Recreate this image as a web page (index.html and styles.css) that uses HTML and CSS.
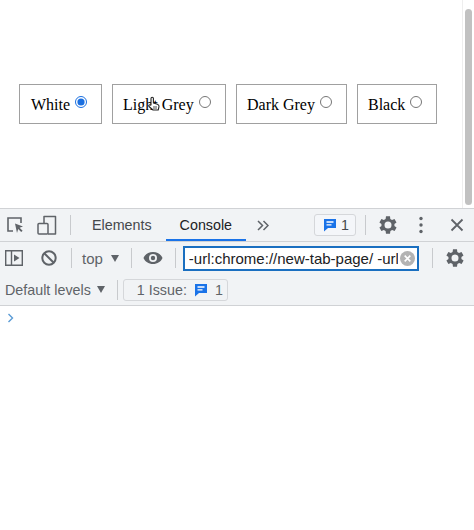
FILE: index.html
```html
<!DOCTYPE html>
<html lang="en">
  <head>
    <meta charset="UTF-8" />
    <title>Document</title>
    <link rel="stylesheet" href="styles.css">
  </head>
  <body>
    <div class="page">
      <div class="swatches">
        <label class="swatch w1">White <input type="radio" name="bg" checked /></label>
        <label class="swatch w2">Light Grey <input type="radio" name="bg" />
          <svg class="cursor" width="14" height="18" viewBox="0 0 14 18">
            <path d="M4 9V2.500a1.200 1.200 0 0 1 2.400 0V7l4 1.200c1.200.4 1.800 1.200 1.600 2.400l-.8 3.400H6L2 10.500c-.9-1 .4-2.300 1.400-1.400z" fill="#fff" stroke="#222" stroke-width="1.100" stroke-linejoin="round"/>
            <path d="M7 10v3M9 10v3" stroke="#222" stroke-width=".8"/>
          </svg>
        </label>
        <label class="swatch w3">Dark Grey <input type="radio" name="bg" /></label>
        <label class="swatch w4">Black <input type="radio" name="bg" /></label>
      </div>
      <div class="scrollbar"><div class="thumb"></div></div>
    </div>

    <div class="devtools">
      <div class="bar tabs">
        <svg class="inspect" width="18" height="18" viewBox="0 0 18 18">
          <path d="M7 15H2V2h13v5" fill="none" stroke="#5f6368" stroke-width="1.600"/>
          <path d="M9 7.500l8 3-3.400 1.200 3 3-1.400 1.400-3-3L11 17z" fill="#5f6368"/>
        </svg>
        <svg class="device" width="20" height="20" viewBox="0 0 20 20">
          <path d="M7 8V1.500h11.500V19H11" fill="none" stroke="#5f6368" stroke-width="1.500" stroke-linejoin="round"/>
          <rect x="1" y="8.500" width="10" height="10.500" rx="1" fill="none" stroke="#5f6368" stroke-width="1.500"/>
        </svg>
        <span class="sep"></span>
        <span class="tab first">Elements</span>
        <span class="tab active">Console</span>
        <svg class="more" width="12" height="11" viewBox="0 0 12 11"><path d="M1 1l4.500 4.500L1 10M6.500 1L11 5.500 6.500 10" fill="none" stroke="#5f6368" stroke-width="1.500"/></svg>
        <span class="issues"><svg width="14" height="14" viewBox="0 0 14 14"><path d="M1 1h12v9H5l-4 3.500z" fill="#1a73e8"/><path d="M3.500 4h7M3.500 6.800h5" stroke="#fff" stroke-width="1.300"/></svg> 1</span>
        <span class="sep"></span>
        <svg class="gear" width="24" height="24" viewBox="0 0 24 24"><path d="M19.400 13a7.500 7.500 0 0 0 0-2l2.100-1.600-2-3.500-2.500 1a7.500 7.500 0 0 0-1.700-1L15 3.200h-4l-.4 2.700a7.500 7.500 0 0 0-1.700 1l-2.500-1-2 3.500L6.500 11a7.500 7.500 0 0 0 0 2l-2.100 1.600 2 3.500 2.500-1a7.500 7.500 0 0 0 1.700 1l.4 2.700h4l.4-2.700a7.500 7.500 0 0 0 1.700-1l2.500 1 2-3.500zM13 15.500a3.500 3.500 0 1 1 0-7 3.500 3.500 0 0 1 0 7z" fill="#5f6368" fill-rule="evenodd" transform="translate(-1 0)"/></svg>
        <svg class="dots" width="6" height="18" viewBox="0 0 6 18"><circle cx="3" cy="2.500" r="1.700" fill="#5f6368"/><circle cx="3" cy="9" r="1.700" fill="#5f6368"/><circle cx="3" cy="15.500" r="1.700" fill="#5f6368"/></svg>
        <svg class="close" width="14" height="14" viewBox="0 0 14 14"><path d="M1.500 1.500l11 11M12.500 1.500l-11 11" stroke="#5f6368" stroke-width="1.800"/></svg>
      </div>
      <div class="bar filter">
        <svg width="18" height="16" viewBox="0 0 18 16"><path d="M.7.700h16.600v14.600H.7zM6.500.7v14.600" fill="none" stroke="#5f6368" stroke-width="1.400"/><path d="M9 4.500l5.500 3.500L9 11.500z" fill="#5f6368"/></svg>
        <svg class="block" width="16" height="16" viewBox="0 0 16 16"><circle cx="8" cy="8" r="6.700" fill="none" stroke="#5f6368" stroke-width="2"/><path d="M3.500 3.500l9 9" stroke="#5f6368" stroke-width="2"/></svg>
        <span class="sep"></span>
        <span class="select top">top</span>
        <span class="arrow"></span>
        <span class="sep"></span>
        <svg class="eye" width="20" height="14" viewBox="0 0 20 14"><path d="M10 1C5.500 1 2 3.500.5 7 2 10.500 5.500 13 10 13s8-2.500 9.500-6C18 3.500 14.500 1 10 1zm0 10a4 4 0 1 1 0-8 4 4 0 0 1 0 8z" fill="#5f6368"/><circle cx="10" cy="7" r="2.200" fill="#5f6368"/></svg>
        <span class="sep"></span>
        <div class="search">
          <span class="query">-url:chrome://new-tab-page/ -url</span>
          <svg class="clear" width="15" height="15" viewBox="0 0 16 16"><circle cx="8" cy="8" r="8" fill="#b3b3b3"/><path d="M5 5l6 6M11 5l-6 6" stroke="#fff" stroke-width="1.700"/></svg>
        </div>
        <span class="sep"></span>
        <svg class="gear" width="24" height="24" viewBox="0 0 24 24"><path d="M19.400 13a7.500 7.500 0 0 0 0-2l2.100-1.600-2-3.500-2.500 1a7.500 7.500 0 0 0-1.700-1L15 3.200h-4l-.4 2.700a7.500 7.500 0 0 0-1.700 1l-2.500-1-2 3.500L6.500 11a7.500 7.500 0 0 0 0 2l-2.100 1.600 2 3.500 2.500-1a7.500 7.500 0 0 0 1.700 1l.4 2.700h4l.4-2.700a7.500 7.500 0 0 0 1.700-1l2.500 1 2-3.500zM13 15.500a3.500 3.500 0 1 1 0-7 3.500 3.500 0 0 1 0 7z" fill="#5f6368" fill-rule="evenodd" transform="translate(-1 0)"/></svg>
      </div>
      <div class="bar levels">
        <span class="select">Default levels</span>
        <span class="arrow"></span>
        <span class="sep"></span>
        <span class="issue-btn">1 Issue: <svg width="14" height="14" viewBox="0 0 14 14"><path d="M1 1h12v9H5l-4 3.500z" fill="#1a73e8"/><path d="M3.500 4h7M3.500 6.800h5" stroke="#fff" stroke-width="1.300"/></svg> 1</span>
      </div>
      <div class="prompt">
        <svg width="7" height="10" viewBox="0 0 7 10"><path d="M1.500 1l4 4-4 4" fill="none" stroke="#5a9bd5" stroke-width="1.400"/></svg>
      </div>
    </div>
  </body>
</html>
```

FILE: styles.css
```css
body {
  margin: 0;
  height: 530px;
  overflow: hidden;
  background: #fff;
  font-family: "Liberation Sans", sans-serif;
  display: flex;
  flex-direction: column;
}
svg {
  display: block;
  flex: none;
}
.page {
  height: 208px;
  display: flex;
  justify-content: space-between;
}
.swatches {
  display: flex;
  gap: 10px;
  align-items: flex-start;
  padding: 84px 0 0 19px;
}
.swatch {
  position: relative;
  height: 40px;
  box-sizing: border-box;
  border: 1px solid #a0a0a0;
  padding-top: 11px;
  padding-left: 10px;
  font: 16px "Liberation Serif", serif;
  color: #000;
  white-space: nowrap;
}
.w1 { width: 83px; padding-left: 11px; }
.w2 { width: 114px; }
.w3 { width: 111px; }
.w4 { width: 80px; }
.swatch input {
  width: 12px;
  height: 12px;
  margin: 0 0 0 1px;
  vertical-align: 2px;
  accent-color: #1a6fe0;
}
.cursor {
  position: absolute;
  left: 34px;
  top: 11px;
}
.scrollbar {
  width: 12px;
  box-sizing: border-box;
  border-left: 1px solid #eeeeee;
  padding: 9px 2px 0;
}
.thumb {
  width: 7px;
  height: 196px;
  border-radius: 4px;
  background: #c1c1c1;
}
.devtools {
  flex: 1;
  color: #45484c;
  font-size: 14.3px;
}
.bar {
  display: flex;
  align-items: center;
  background: #f1f3f5;
  box-sizing: border-box;
}
.tabs {
  height: 34px;
  border-top: 1px solid #d0d2d5;
  border-bottom: 1px solid #d0d2d5;
  padding: 0 10px 0 6px;
}
.filter {
  height: 32px;
  padding-left: 5px;
}
.levels {
  height: 32px;
  padding-left: 5px;
  border-bottom: 1px solid #d0d2d5;
}
.sep {
  width: 1px;
  height: 20px;
  background: #c8cacd;
  flex: none;
}
.device { margin-left: 13px; }
.device + .sep { margin-left: 13px; }
.tab {
  height: 32px;
  line-height: 32px;
  padding: 0 14px;
  box-sizing: border-box;
}
.tab.first { margin-left: 7px; }
.tab.active {
  color: #202124;
  border-bottom: 2px solid #1a73e8;
}
.more { margin-left: 11px; }
.issues {
  display: flex;
  align-items: center;
  gap: 4px;
  width: 42px;
  height: 22px;
  box-sizing: border-box;
  margin-left: auto;
  margin-right: 9px;
  padding-left: 8px;
  border: 1px solid #d5d7da;
  border-radius: 3px;
  background: #f4f6f9;
}
.gear { margin-left: 10px; }
.dots { margin-left: 18px; }
.close { margin-left: 26px; }
.filter .block { margin-left: 18px; }
.block + .sep { margin-left: 14px; }
.select {
  color: #5f6368;
  white-space: nowrap;
}
.select.top { margin-left: 10px; font-size: 15px; }
.arrow {
  width: 0;
  height: 0;
  flex: none;
  margin-left: 6px;
  border-left: 4px solid transparent;
  border-right: 4px solid transparent;
  border-top: 7px solid #5f6368;
}
.top + .arrow { margin-left: 8px; }
.arrow + .sep { margin-left: 12px; }
.eye { margin: 0 12px 0 11px; }
.eye + .sep { margin-right: 7px; }
.search {
  display: flex;
  align-items: center;
  width: 236px;
  height: 25px;
  box-sizing: border-box;
  border: 2px solid #1a6fc0;
  background: #fff;
  padding-left: 4px;
  color: #202124;
  font-size: 15px;
  overflow: hidden;
}
.query { white-space: nowrap; flex: none; width: 209px; overflow: hidden; }
.clear { margin-left: 2px; }
.search + .sep { margin-left: 13px; }
.levels .sep + .issue-btn { margin-left: 5px; }
.issue-btn {
  display: flex;
  align-items: center;
  gap: 7px;
  width: 105px;
  height: 22px;
  box-sizing: border-box;
  padding-left: 13px;
  border: 1px solid #d5d7da;
  border-radius: 3px;
  color: #5f6368;
}
.prompt {
  padding: 7px 0 0 7px;
}
```
